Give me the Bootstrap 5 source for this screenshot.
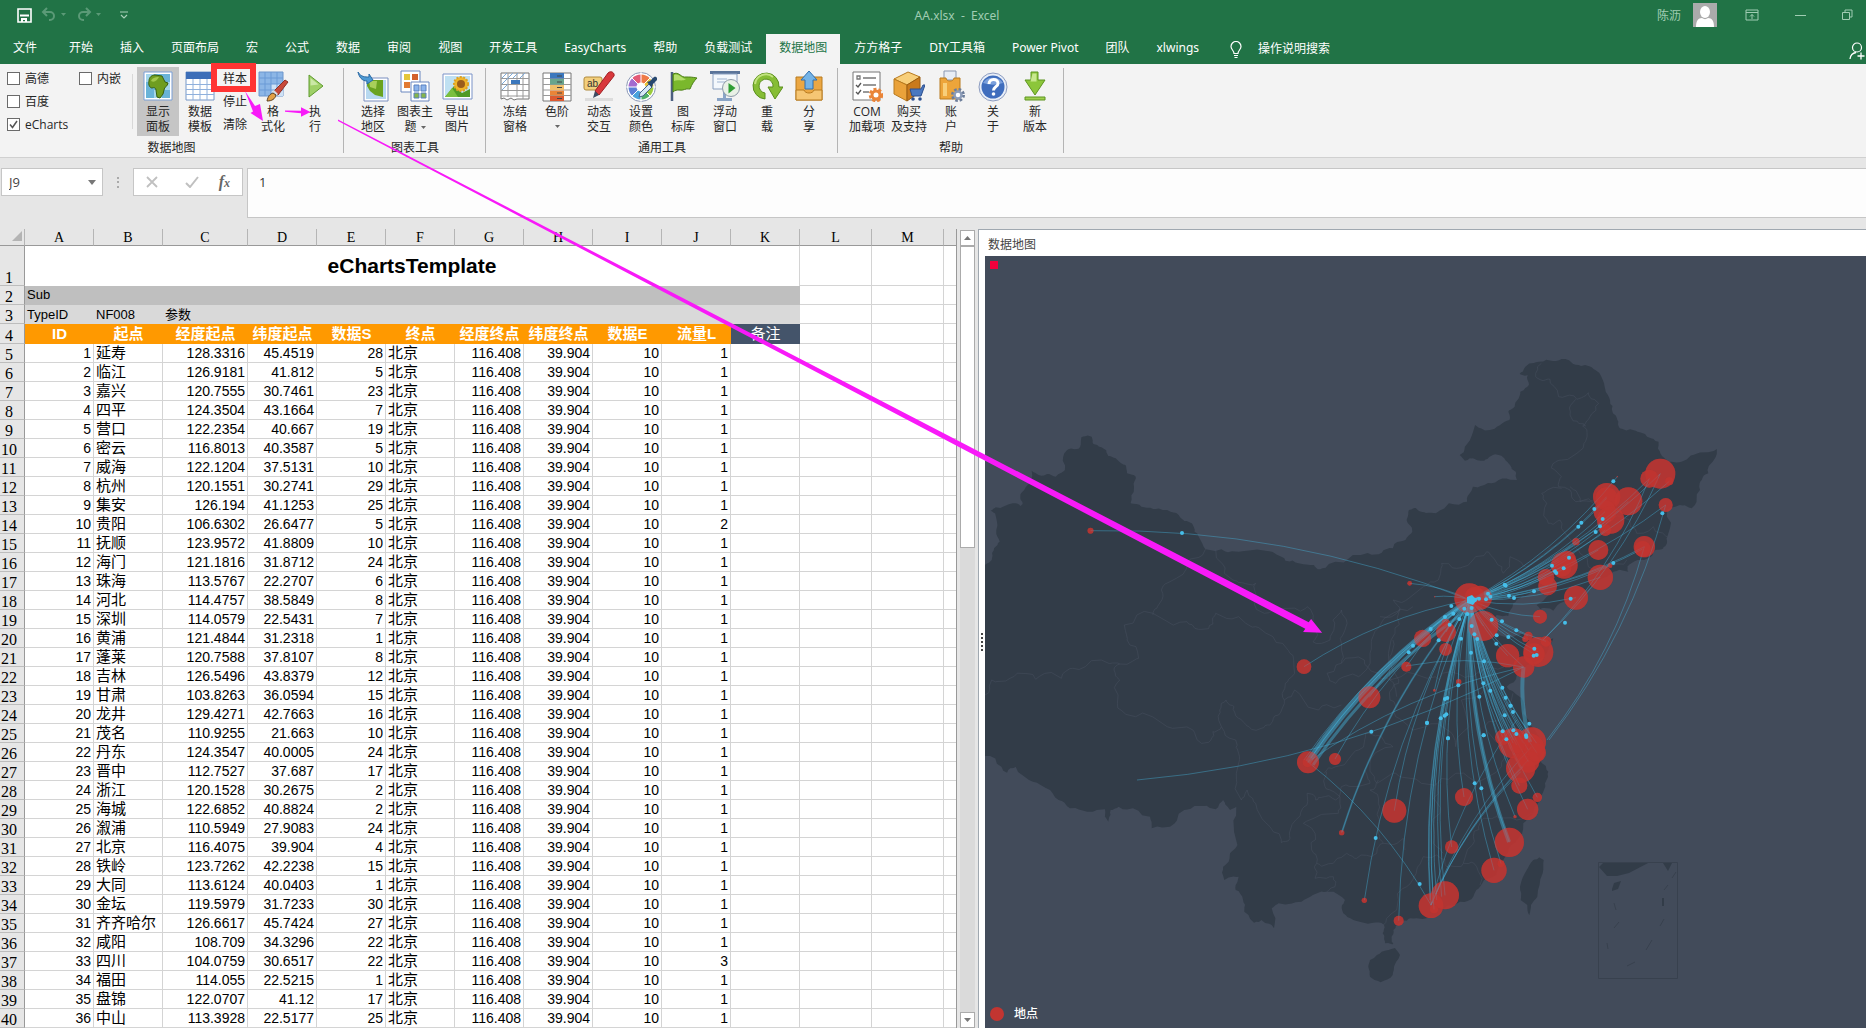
<!DOCTYPE html>
<html lang="zh-CN">
<head>
<meta charset="utf-8">
<meta name="viewport" content="width=device-width, initial-scale=1">
<title>AA.xlsx - Excel</title>
<link href="https://cdn.jsdelivr.net/npm/bootstrap@5.3.0/dist/css/bootstrap.min.css" rel="stylesheet">
<style>
  :root { --xl-green:#217346; --edge:#c6c6c6; --ui:"Open Sans","Noto Sans CJK SC",sans-serif; }
  body { font-family:var(--ui); font-size:12px; line-height:15px; color:#262626; background:#e6e6e6; }
  svg { display:block; }
  .titlebar { height:32px; padding-bottom:2px; background:var(--xl-green); color:#a0cdb3; }
  .titlebar .side { flex:1 1 0; }
  .doc-name { white-space:pre; margin-left:44px; font-family:"Noto Sans",sans-serif; }
  .qat { gap:9px; padding-left:17px; }
  .wincontrols { gap:12px; padding-right:13px; }
  .tabstrip { height:32px; background:var(--xl-green); font-family:"Noto Sans","Noto Sans CJK SC",sans-serif; }
  .tabstrip .nav-link { color:#fff; padding:0 13px; margin-right:1px; height:30px; line-height:28px; border-radius:0; white-space:nowrap; }
  .tabstrip .nav-link.first { margin-right:6px; }
  .tabstrip .nav-link.active { background:#f3f3f3; color:var(--xl-green); }
  .ribbon { height:94px; background:#f3f3f3; border-bottom:1px solid #d0d0d0; }
  .rgroup { padding:3px 7px 0 8px; }
  .rgroup.first { padding-left:7px; }
  .rbody { height:70px; }
  .rsep { width:1px; height:85px; margin-top:4px; background:#b4b4b4; }
  .rsep.soft { height:55px; margin:7px 4px 0 0; background:#d8d8d8; }
  .rlabel { text-align:center; line-height:16px; margin-top:3px; }
  .rbtn { width:42px; height:69px; padding:0; border:0; border-radius:0; font-size:12px; line-height:15px; color:#262626; white-space:nowrap; display:flex; flex-direction:column; align-items:center; }
  .rbtn svg { width:32px; height:32px; margin:3px 0 2px; flex:none; }
  .rbtn.on { background:#c5c5c5; }
  .smallcol { width:31px; }
  .smallcol .btn { height:23px; padding:0; border:0; font-size:12px; line-height:22px; color:#262626; text-align:left; position:relative; white-space:nowrap; padding-left:2px; }
  .redframe { position:absolute; left:-10px; top:-4px; width:45px; height:29px; border:6px solid #ff3433; }
  .checks { grid-template-columns:72px 49px; grid-auto-rows:23px; display:grid; width:125px; }
  .checks label { display:flex; align-items:center; gap:5px; white-space:nowrap; }
  .checks input { appearance:none; width:13px; height:13px; border:1px solid #6a6a6a; background:#fff center/11px no-repeat; margin:0; flex:none; }
  .checks input:checked { background-image:url("data:image/svg+xml,%3Csvg xmlns='http://www.w3.org/2000/svg' viewBox='0 0 11 11'%3E%3Cpath d='M2 5.5l2.5 3L9 2' fill='none' stroke='%23555' stroke-width='1.5'/%3E%3C/svg%3E"); }
  .formula { padding:10px 0 11px 1px; }
  .formula select { appearance:none; width:102px; height:28px; border:1px solid var(--edge); background:#fff; padding:0 7px; border-radius:0; color:#444; font-size:13px; }
  .namebox { position:relative; }
  .namebox svg { position:absolute; right:7px; top:12px; }
  .dots { margin:8px 14px 0; }
  .fxbox { width:110px; height:28px; border:1px solid var(--edge); background:#fff; padding:0 12px; }
  .fxbox .btn { padding:0; border:0; line-height:1; }
  .fxbox .fn { font:italic 700 16px "Liberation Serif",serif; color:#666; }
  .fxbox .fn span { font-size:12px; }
  .formula input { height:50px; margin-left:4px; border:1px solid var(--edge); border-right:0; background:#fdfdfd; padding:0 11px 22px; color:#333; border-radius:0; min-width:0; font-size:13px; }
  .work { min-height:0; }
  .grid { table-layout:fixed; width:957px; border-collapse:separate; border-spacing:0; font-family:"Liberation Sans","Noto Sans CJK SC",sans-serif; font-size:14px; line-height:18px; color:#000; border-right:1px solid #999; }
  .grid th, .grid td { padding:0 2px; height:19px; border-right:1px solid #d4d4d4; border-bottom:1px solid #d4d4d4; background:#fff; overflow:hidden; white-space:nowrap; vertical-align:middle; text-align:right; font-weight:400; }
  .grid .zh { text-align:left; font-size:15px; }
  .grid thead th { height:17px; line-height:14px; background:#e6e6e6; border-right-color:#b5b5b5; border-bottom-color:#999; text-align:center; font-family:"Liberation Serif",serif; font-size:14px; vertical-align:bottom; }
  .grid tbody th { background:#e6e6e6; border-right-color:#999; border-bottom-color:#bdbdbd; font-family:"Liberation Serif",serif; font-size:16px; line-height:15px; text-align:left; vertical-align:bottom; padding:0 1px; }
  .grid tbody th.narrow { padding-left:5px; }
  .grid td:last-child, .grid thead th:last-child { border-right:0; }
  .grid .r1 td { height:40px; }
  .grid .r1 .sheet-title { font-size:21px; font-weight:700; text-align:center; border-bottom:0; }
  .grid .r2 .fillc { background:#bfbfbf; border-color:#bfbfbf; border-right:0; }
  .grid .r3 td { height:18px; line-height:17px; }
  .grid .r3 .fillc { background:#d9d9d9; border-bottom:0; border-right:0; }
  .grid .r2 .fillc, .grid .r3 .fillc { text-align:left; font-size:13px; }
  .grid .r4 td { height:20px; }
  .grid .r4 .hd { background:#ff9900; color:#fff; font-weight:700; font-size:15px; text-align:center; border:0; padding:0; }
  .grid .r4 .hd.note { background:#44546a; font-weight:400; }
  .vscroll { width:15px; margin:1px 3px 0 3px; background:#dadada; }
  .vscroll .btn { height:16px; padding:0; border:1px solid #ababab; border-radius:0; background:#fff; display:flex; align-items:center; justify-content:center; }
  .thumb { height:302px; border:1px solid #ababab; background:#fff; }
  .pane { border-left:1px solid #a0a8b0; border-top:1px solid #a0a8b0; background:#fff; min-width:0; }
  .pane-title { height:26px; line-height:30px; padding-left:9px; color:#444; }
  .gripbar { width:6px; flex:none; padding-top:377px; }
  .mapbox { min-width:0; min-height:0; position:relative; background:#424b5a; }
  .mapbox > svg { width:100%; height:100%; }
  .legend-item { position:absolute; left:5px; bottom:7px; color:#fff; gap:10px; font-weight:500; }
  .legend-item i { width:14px; height:14px; border-radius:50%; background:#c23531; }
  .arrows { position:absolute; left:0; top:0; pointer-events:none; z-index:5; }
</style>
</head>
<body class="vh-100 overflow-hidden d-flex flex-column position-relative">

<header class="titlebar d-flex align-items-center">
  <div class="side qat d-flex align-items-center">
    <svg width="15" height="15" viewBox="0 0 15 15"><path d="M1 1h13v13H1z" fill="none" stroke="#fff" stroke-width="1.6"/><path d="M3 7.500h9" stroke="#fff" stroke-width="2"/><path d="M4 10h6v4H8v-2H6v2H4z" fill="#fff"/></svg>
    <svg width="26" height="16" viewBox="0 0 26 16"><path d="M6 1L2 5l4 4M2 5h7a4 4 0 0 1 0 8H8" fill="none" stroke="#5b9a77" stroke-width="2"/><path d="M20 6h5l-2.500 3z" fill="#5b9a77"/></svg>
    <svg width="26" height="16" viewBox="0 0 26 16"><path d="M10 1l4 4-4 4M14 5H7a4 4 0 0 0 0 8h1" fill="none" stroke="#5b9a77" stroke-width="2"/><path d="M20 6h5l-2.500 3z" fill="#5b9a77"/></svg>
    <svg class="ms-2" width="10" height="10" viewBox="0 0 10 10"><path d="M1 2h8M2 5l3 3 3-3" fill="none" stroke="#a8d0b8" stroke-width="1.2"/></svg>
  </div>
  <div class="doc-name">AA.xlsx  -  Excel</div>
  <div class="side wincontrols d-flex align-items-center justify-content-end">
    <span>陈沥</span>
    <svg width="24" height="24" viewBox="0 0 24 24"><path fill="#ababab" d="M0 0h24v24H0z"/><ellipse cx="12" cy="9" rx="5" ry="6" fill="#fff"/><path d="M3 24c0-6 2-9 6-9 2 1.500 4 1.500 6 0 4 0 6 3 6 9z" fill="#fff"/></svg>
    <svg class="ms-3" width="14" height="12" viewBox="0 0 14 12"><path d="M1 1h12v10H1zM1 3.500h12M7 10V5.500M5 7.500l2-2 2 2" fill="none" stroke="#a0cdb3"/></svg>
    <svg class="ms-4" width="11" height="12" viewBox="0 0 11 12"><path d="M0 6.500h11" stroke="#a0cdb3"/></svg>
    <svg class="ms-4" width="11" height="12" viewBox="0 0 11 12"><path d="M.5 3.500h7v7h-7zM3 3.500V1h7v7H7.500" fill="none" stroke="#a0cdb3"/></svg>
  </div>
</header>

<nav class="tabstrip d-flex align-items-end">
  <div class="nav flex-nowrap">
    <a class="nav-link first" href="#">文件</a><a class="nav-link" href="#">开始</a><a class="nav-link" href="#">插入</a><a class="nav-link" href="#">页面布局</a><a class="nav-link" href="#">宏</a><a class="nav-link" href="#">公式</a><a class="nav-link" href="#">数据</a><a class="nav-link" href="#">审阅</a><a class="nav-link" href="#">视图</a><a class="nav-link" href="#">开发工具</a><a class="nav-link" href="#">EasyCharts</a><a class="nav-link" href="#">帮助</a><a class="nav-link" href="#">负载测试</a><a class="nav-link active" href="#">数据地图</a><a class="nav-link" href="#">方方格子</a><a class="nav-link" href="#">DIY工具箱</a><a class="nav-link" href="#">Power Pivot</a><a class="nav-link" href="#">团队</a><a class="nav-link" href="#">xlwings</a>
    <a class="nav-link d-flex align-items-center gap-3 ms-1" href="#"><svg width="12" height="17" viewBox="0 0 12 17"><path d="M4 12.500c0-3-3-4-3-7a5 5 0 0 1 10 0c0 3-3 4-3 7zM4 14.500h4M4.500 16.500h3" fill="none" stroke="#fff" stroke-width="1.2"/></svg>操作说明搜索</a>
  </div>
  <svg class="ms-auto mb-1" width="17" height="18" viewBox="0 0 17 18"><circle cx="8" cy="5.500" r="4.500" fill="none" stroke="#fff" stroke-width="1.200"/><path d="M1 17c.5-4 2.500-6 6-6.500M8.500 14h7M12 10.500v7" fill="none" stroke="#fff" stroke-width="1.300"/></svg>
</nav>

<section class="ribbon d-flex">
  <div class="rgroup first">
    <div class="rbody d-flex">
      <div class="checks">
        <label><input type="checkbox">高德</label><label><input type="checkbox">内嵌</label>
        <label style="grid-column:1"><input type="checkbox">百度</label>
        <label style="grid-column:1"><input type="checkbox" checked>eCharts</label>
      </div>
      <div class="rsep soft"></div>
      <button class="btn rbtn on"><svg viewBox="0 0 32 32"><path d="M2 2h28v28H2z" fill="#fff" stroke="#7b9fd6"/><path d="M4 4h24v24H4z" fill="#69b3d8"/><path d="M4 4h8v8H4zM20 12h8v8h-8zM12 20h8v8h-8z" fill="#a4d6ec"/><path d="M7 11c0-4 3-6 6-6l7 1 3 6 3 1c0 3-4 4-4 7l-1 4-3 4-3-1-1-7c0-2-2-3-4-2-2 0-4-3-3-7z" fill="#6f9d21" stroke="#38610f"/><path d="M9 11c1-3 4-4 8-4-2 3-4 6-8 4z" fill="#a3c94e"/></svg>显示<br>面板</button>
      <button class="btn rbtn"><svg viewBox="0 0 32 32"><path d="M2 2h28v28H2z" fill="#fff" stroke="#7698c8"/><path d="M2 2h28v7H2z" fill="#3c6eb8"/><path d="M2 14.500h28M2 19.500h28M2 24.500h28M9 9v21M16 9v21M23 9v21" stroke="#8fb0dc"/></svg>数据<br>模板</button>
      <div class="smallcol d-flex flex-column">
        <button class="btn">样本<span class="redframe"></span></button><button class="btn">停止</button><button class="btn">清除</button>
      </div>
      <button class="btn rbtn"><svg viewBox="0 0 32 32"><path d="M2 2h24v24H2z" fill="#8cb6e6" stroke="#6d96cc"/><path d="M14 14h12v12H14z" fill="#cfe2f6"/><path d="M2 8h24M2 14h24M2 20h24M8 2v24M14 2v24M20 2v24" stroke="#6a9ad6"/><path d="M16 22L28 10l3 2-10 13z" fill="#c8493a" stroke="#8f2f25"/><path d="M15 22l2-2 4 4-2 2z" fill="#d5dbe4"/><path d="M10 31c1-5 3-7 6-8l3 2c-1 4-4 6-9 6z" fill="#e2a046" stroke="#5b4022"/></svg>格<br>式化</button>
      <button class="btn rbtn"><svg viewBox="0 0 32 32"><path d="M10 5l14 11-14 11z" fill="#9fd067" stroke="#5e9a2e"/><path d="M11.500 8l8 6.500-8 1z" fill="#cbe8a6"/></svg>执<br>行</button>
    </div>
    <div class="rlabel">数据地图</div>
  </div>
  <div class="rsep"></div>
  <div class="rgroup">
    <div class="rbody d-flex">
      <button class="btn rbtn"><svg viewBox="0 0 32 32"><path d="M7 8h24v23H7z" fill="#fff" stroke="#7b8fc0"/><path d="M9 10h20v19H9z" fill="#b7d8f0"/><path d="M10 10h16v17l-8-2-5-4-3-5z" fill="#6aa320"/><path d="M12 11h8l-1 8-6-2z" fill="#a9cf5a"/><path d="M1 2c3 5 7 5 11 5V4l4 6-6 4V11C5 11 2 7 1 2z" fill="#4d9ad4" stroke="#2a6aa5"/></svg>选择<br>地区</button>
      <button class="btn rbtn"><svg viewBox="0 0 32 32"><path d="M2 1h19v21H2z" fill="#fff" stroke="#6b87c0"/><path d="M5 4h6v6H5z" fill="#e4c63a"/><path d="M13 4h6v6h-6z" fill="#d3602c"/><path d="M5 12h6v6H5z" fill="#e27a33"/><path d="M12 12h18v19H12z" fill="#fff" stroke="#6b87c0"/><path d="M15 15h5v6h-5zM22 15h5v6h-5z" fill="#8cb4ec" stroke="#5a80c0"/><path d="M15 23h5v5h-5zM22 23h5v5h-5z" fill="#86b54a" stroke="#5a80c0"/></svg>图表主<br><span>题<svg class="d-inline-block m-0 ms-1" style="width:5px;height:5px" viewBox="0 0 5 5"><path d="M0 1h5L2.500 4z" fill="#666"/></svg></span></button>
      <button class="btn rbtn"><svg viewBox="0 0 32 32"><path d="M2 4h29v25H2z" fill="#fff" stroke="#7b93c8"/><path d="M4 6h25v21H4z" fill="#bfe0f2"/><path d="M4 27l9-11 8 7 8-4v8z" fill="#4f9a25"/><path d="M4 27l7-9 6 9z" fill="#7abf3e"/><circle cx="20" cy="14" r="7" fill="#f0b52a" stroke="#dda024" stroke-dasharray="2 1.500" stroke-width="2"/><circle cx="20" cy="14" r="4" fill="#9a5c1c"/></svg>导出<br>图片</button>
    </div>
    <div class="rlabel">图表工具</div>
  </div>
  <div class="rsep"></div>
  <div class="rgroup">
    <div class="rbody d-flex">
      <button class="btn rbtn"><svg viewBox="0 0 32 32"><path d="M2 3h28v26H18l-3 1-3-2-4 2-3-2-3 1z" fill="#fff" stroke="#777"/><path d="M2 8.500h28M2 14.500h28M2 20.500h28M2 26h28M9 3v24M18 3v24M24 3v26" stroke="#999"/><path d="M12 10h9v4h-9z" fill="#3c78bd"/><path d="M3 8l5-5M3 14l11-11M3 20l6-6M14 8l5-5M21 8l5-5" stroke="#7eaad8"/></svg>冻结<br>窗格</button>
      <button class="btn rbtn"><svg viewBox="0 0 32 32"><path d="M2 3h28v28H2z" fill="#fff" stroke="#777"/><path d="M2 8.500h28M2 14.500h28M2 20h28M2 25.500h28" stroke="#999"/><path d="M9 3h14v5.500H9z" fill="#3c78bd"/><path d="M9 9h14v5.500H9z" fill="#69a58c"/><path d="M9 15h14v5H9z" fill="#f0bf6a"/><path d="M9 20.500h14v5H9z" fill="#ea8438"/><path d="M9 26h14v5H9z" fill="#dc5a32"/><path d="M16 6h5M16 12h5M16 17.500h5M16 23h5M16 28.500h5" stroke="#444"/></svg>色阶<br><svg style="width:5px;height:5px;margin:5px 0 0" viewBox="0 0 5 5"><path d="M0 1h5L2.500 4z" fill="#666"/></svg></button>
      <button class="btn rbtn"><svg viewBox="0 0 32 32"><rect x="1" y="7" width="18" height="13" rx="2" fill="#f3cf7c" stroke="#b08a3c"/><text x="4" y="17" font-size="10" fill="#333" font-family="Liberation Sans">ab</text><path d="M2 28h28v3H2z" fill="#dcdcdc"/><path d="M12 21L25 3c3-3 7 0 6 3L16 25z" fill="#d8383c" stroke="#a02025"/><path d="M10 28l2-7 4 4z" fill="#3d4c63"/></svg>动态<br>交互</button>
      <button class="btn rbtn"><svg viewBox="0 0 32 32"><circle cx="16" cy="17" r="14.500" fill="#fff" stroke="#8a97b5"/><g fill="none" stroke-width="8"><path d="M16 8.500A8.500 8.500 0 0 1 22 11" stroke="#ee7a48"/><path d="M22 11a8.500 8.500 0 0 1 2.500 6" stroke="#e9c33b"/><path d="M24.500 17a8.500 8.500 0 0 1-2.500 6" stroke="#9bcb3c"/><path d="M22 23a8.500 8.500 0 0 1-6 2.500" stroke="#4fb06a"/><path d="M16 25.500A8.500 8.500 0 0 1 10 23" stroke="#4aa3dd"/><path d="M10 23a8.500 8.500 0 0 1-2.500-6" stroke="#5c7fd6"/><path d="M7.500 17A8.500 8.500 0 0 1 10 11" stroke="#a46bcf"/><path d="M10 11a8.500 8.500 0 0 1 6-2.500" stroke="#e35a78"/></g><path d="M16 2v30M1 17h30M6 7l20 20M26 7L6 27" stroke="#fff"/><path d="M14 27l1-4 9-9 3 3-9 9z" fill="#d6e8f7" stroke="#47638c"/><path d="M22 12l3-1 4-4c2-1 4 1 3 3l-4 4-1 4z" fill="#28486f"/></svg>设置<br>颜色</button>
      <button class="btn rbtn"><svg viewBox="0 0 32 32"><path d="M5 2v29" stroke="#4c5f80" stroke-width="2.500"/><path d="M6 4c6-3 8 4 13 3 4 0 6 0 11 1-3 3-5 6-7 11-5-1-6 2-11 1-2 0-4 0-6 2z" fill="#7ab82c" stroke="#4d8018"/><path d="M7 5c5-2 8 4 12 4-4 3-8 0-12 2z" fill="#b4dd6c"/></svg>图<br>标库</button>
      <button class="btn rbtn"><svg viewBox="0 0 32 32"><path d="M1 1h30v3H1z" fill="#5a7499"/><path d="M4 4h24v15H4z" fill="#f4f8fc" stroke="#8aa0c0"/><path d="M8 9h10M8 12h8" stroke="#9fb4d0"/><path d="M14 19h3v9h6v3H8v-3h6z" fill="#8aa4c6"/><circle cx="22" cy="18" r="8.500" fill="#e9f1e6" stroke="#8d9aa8"/><path d="M19.500 13l7 5-7 5.500z" fill="#2f9e35"/></svg>浮动<br>窗口</button>
      <button class="btn rbtn"><svg viewBox="0 0 32 32"><path d="M14 29A13 13 0 1 1 28 17h4l-8 12-7-12h5a7 7 0 1 0-8 6z" fill="#86bd35" stroke="#5a8f1d"/><path d="M4 14A11 11 0 0 1 22 7" fill="none" stroke="#c2e37f" stroke-width="2"/></svg>重<br>载</button>
      <button class="btn rbtn"><svg viewBox="0 0 32 32"><path d="M3 7h26v23H3z" fill="#eba743" stroke="#b87a1e"/><path d="M3 20h8c1 4 9 4 10 0h8v10H3z" fill="#f6c674" stroke="#b87a1e"/><path d="M16 1l8 9h-4v9h-8v-9H8z" fill="#74b3e6" stroke="#2f6faf"/></svg>分<br>享</button>
    </div>
    <div class="rlabel">通用工具</div>
  </div>
  <div class="rsep"></div>
  <div class="rgroup">
    <div class="rbody d-flex">
      <button class="btn rbtn"><svg viewBox="0 0 32 32"><path d="M2 2h27v28H2z" fill="#fff" stroke="#777"/><path d="M6 6h3v3H6zM12 8h13M12 15h13M12 22h6" fill="none" stroke="#777" stroke-width="1.300"/><path d="M5 15l2 2 3-4M5 22l2 2 3-4" fill="none" stroke="#555" stroke-width="1.300"/><circle cx="25" cy="25" r="4" fill="none" stroke="#ea8438" stroke-width="3"/><circle cx="25" cy="25" r="6" fill="none" stroke="#ea8438" stroke-width="2.500" stroke-dasharray="3 2"/></svg>COM<br>加载项</button>
      <button class="btn rbtn"><svg viewBox="0 0 32 32"><path d="M1 9l14-7 12 5-13 8z" fill="#f8cf7a" stroke="#b87a1e"/><path d="M1 9l13 6v16L1 24z" fill="#eaa23a" stroke="#b87a1e"/><path d="M14 15l13-8v15l-13 9z" fill="#c97a1c" stroke="#9a5c10"/><path d="M17 19h11l2-4h2l-4 11h-9z" fill="#4a78c0" stroke="#2c4f8f"/><circle cx="20" cy="29" r="1.800" fill="#2c4f8f"/><circle cx="27" cy="29" r="1.800" fill="#2c4f8f"/></svg>购买<br>及支持</button>
      <button class="btn rbtn"><svg viewBox="0 0 32 32"><path d="M9 1h12v9H9z" fill="#e8edf5" stroke="#8a97b0"/><path d="M5 8h6c0 4 8 4 8 0h6v21H5z" fill="#eda53a" stroke="#b87a1e"/><path d="M8 13h4v13H8z" fill="#f8cf7a"/><circle cx="23" cy="25" r="5.500" fill="none" stroke="#6c7d9a" stroke-width="3" stroke-dasharray="2.500 1.800"/><circle cx="23" cy="25" r="3.500" fill="#fff" stroke="#8c9cb8" stroke-width="2.500"/></svg>账<br>户</button>
      <button class="btn rbtn"><svg viewBox="0 0 32 32"><circle cx="16" cy="17" r="14" fill="#e8eef8" stroke="#8c9cc0"/><circle cx="16" cy="17" r="11.500" fill="#3f6dbd"/><path d="M6 13a11 9 0 0 1 20 0 20 12 0 0 1-20 0z" fill="#7ba0dc"/><path d="M12 14c0-6 9-6 9-.5 0 3-4.500 3.500-4.500 7" fill="none" stroke="#fff" stroke-width="3"/><circle cx="16.500" cy="24" r="1.800" fill="#fff"/></svg>关<br>于</button>
      <button class="btn rbtn"><svg viewBox="0 0 32 32"><path d="M12 2h7v8h7L16 25 6 10h6z" fill="#8cc63a" stroke="#5d9420"/><path d="M13.500 3.500h4v8h-6z" fill="#c8e88e"/><path d="M6 27h20v3H6z" fill="#9fd04e" stroke="#5d9420"/></svg>新<br>版本</button>
    </div>
    <div class="rlabel">帮助</div>
  </div>
  <div class="rsep"></div>
</section>

<section class="formula d-flex align-items-start">
  <div class="namebox"><select aria-label="名称框"><option>J9</option></select><svg width="8" height="5" viewBox="0 0 8 5"><path d="M0 0h8L4 5z" fill="#777"/></svg></div>
  <svg class="dots" width="2" height="13" viewBox="0 0 2 13"><path d="M1 1v2M1 5v2M1 10v2" stroke="#aaa" stroke-width="2"/></svg>
  <div class="fxbox d-flex align-items-center justify-content-between">
    <button class="btn" aria-label="取消"><svg width="12" height="12" viewBox="0 0 12 12"><path d="M1 1l10 10M11 1L1 11" stroke="#c0c0c0" stroke-width="1.800"/></svg></button>
    <button class="btn ms-2" aria-label="输入"><svg width="14" height="12" viewBox="0 0 14 12"><path d="M1 7l4 4 8-10" fill="none" stroke="#c0c0c0" stroke-width="2"/></svg></button>
    <button class="btn fn" aria-label="插入函数">f<span>x</span></button>
  </div>
  <input class="flex-grow-1" value="1" aria-label="编辑栏">
</section>

<main class="work d-flex flex-grow-1">
  <table class="grid flex-shrink-0">
    <colgroup><col style="width:25px"><col style="width:69px"><col style="width:69px"><col style="width:85px"><col style="width:69px"><col style="width:69px"><col style="width:69px"><col style="width:69px"><col style="width:69px"><col style="width:69px"><col style="width:69px"><col style="width:69px"><col style="width:72px"><col style="width:72px"><col style="width:12px"></colgroup>
    <thead><tr><th><svg class="ms-auto mb-1" width="10" height="10" viewBox="0 0 10 10"><path d="M10 0v10H0z" fill="#b4b4b4"/></svg></th><th>A</th><th>B</th><th>C</th><th>D</th><th>E</th><th>F</th><th>G</th><th>H</th><th>I</th><th>J</th><th>K</th><th>L</th><th>M</th><th></th></tr></thead>
    <tbody id="cells">
      <tr class="r1"><th class="narrow">1</th><td class="sheet-title" colspan="11">eChartsTemplate</td><td></td><td></td><td></td></tr>
      <tr class="r2"><th class="narrow">2</th><td class="fillc" colspan="11">Sub</td><td></td><td></td><td></td></tr>
      <tr class="r3"><th class="narrow">3</th><td class="fillc">TypeID</td><td class="fillc">NF008</td><td class="fillc" colspan="9">参数</td><td></td><td></td><td></td></tr>
      <tr class="r4"><th class="narrow">4</th><td class="hd">ID</td><td class="hd">起点</td><td class="hd">经度起点</td><td class="hd">纬度起点</td><td class="hd">数据S</td><td class="hd">终点</td><td class="hd">经度终点</td><td class="hd">纬度终点</td><td class="hd">数据E</td><td class="hd">流量L</td><td class="hd note">备注</td><td></td><td></td><td></td></tr>
    </tbody>
  </table>
  <div class="vscroll d-flex flex-column flex-shrink-0">
    <button class="btn" aria-label="向上滚动"><svg width="7" height="4" viewBox="0 0 7 4"><path d="M0 4h7L3.500 0z" fill="#777"/></svg></button>
    <div class="thumb"></div>
    <button class="btn mt-auto" aria-label="向下滚动"><svg width="7" height="4" viewBox="0 0 7 4"><path d="M0 0h7L3.500 4z" fill="#777"/></svg></button>
  </div>
  <aside class="pane d-flex flex-column flex-grow-1">
    <div class="pane-title">数据地图</div>
    <div class="d-flex flex-grow-1 overflow-hidden">
      <div class="gripbar"><svg width="6" height="19" viewBox="0 0 6 19"><path d="M3 0v19" stroke="#444" stroke-width="2" stroke-dasharray="2 2"/></svg></div>
      <div class="mapbox flex-grow-1">
        <svg id="map" viewBox="985 256 881 772" preserveAspectRatio="xMinYMin slice"></svg>
        <div class="legend-item d-flex align-items-center"><i></i><span>地点</span></div>
      </div>
    </div>
  </aside>
</main>

<svg class="arrows" width="1866" height="1028" viewBox="0 0 1866 1028">
  <g fill="#f81af8"><path d="M338 119.500l970.700 502.700 2.400-3.200 11 13.800-19-.8 2.200-3.200L338 121z"/><path d="M245 91l10 15 5-2 3 17-12.500-8 2.500-1.500z"/><path d="M285 110.500l16 .2v-3.500l9.500 4.800-9.500 4.800v-3.500l-16-1.500z"/></g>
</svg>

<script src="https://cdn.jsdelivr.net/npm/bootstrap@5.3.0/dist/js/bootstrap.bundle.min.js"></script>
<script>
const rows = `延寿 128.3316 45.4519 28|临江 126.9181 41.812 5|嘉兴 120.7555 30.7461 23|四平 124.3504 43.1664 7|营口 122.2354 40.667 19|密云 116.8013 40.3587 5|威海 122.1204 37.5131 10|杭州 120.1551 30.2741 29|集安 126.194 41.1253 25|贵阳 106.6302 26.6477 5 2|抚顺 123.9572 41.8809 10|海门 121.1816 31.8712 24|珠海 113.5767 22.2707 6|河北 114.4757 38.5849 8|深圳 114.0579 22.5431 7|黄浦 121.4844 31.2318 1|蓬莱 120.7588 37.8107 8|吉林 126.5496 43.8379 12|甘肃 103.8263 36.0594 15|龙井 129.4271 42.7663 16|茂名 110.9255 21.663 10|丹东 124.3547 40.0005 24|晋中 112.7527 37.687 17|浙江 120.1528 30.2675 2|海城 122.6852 40.8824 2|溆浦 110.5949 27.9083 24|北京 116.4075 39.904 4|铁岭 123.7262 42.2238 15|大同 113.6124 40.0403 1|金坛 119.5979 31.7233 30|齐齐哈尔 126.6617 45.7424 27|咸阳 108.709 34.3296 22|四川 104.0759 30.6517 22 3|福田 114.055 22.5215 1|盘锦 122.0707 41.12 17|中山 113.3928 22.5177 25`.split('|');
document.getElementById('cells').insertAdjacentHTML('beforeend', rows.map((r, i) => {
  const [n, x, y, s, l = 1] = r.split(' ');
  return `<tr><th${i < 5 ? ' class="narrow"' : ''}>${i + 5}</th><td>${i + 1}</td><td class="zh">${n}</td><td>${x}</td><td>${y}</td><td>${s}</td><td class="zh">北京</td><td>116.408</td><td>39.904</td><td>10</td><td>${l}</td><td></td><td></td><td></td><td></td></tr>`;
}).join(''));

const sheet = (ox, oy, sx, sy) => s => s.trim().split(/\s+/).map(p => { const [x, y, ...k] = p.split(',').map(Number); return [ox + x / sx, oy + y / sy, ...k]; });
const N = sheet(970, 220, 1.75, 3), S = sheet(970, 600, 1.75, 3), NE = sheet(1380, 420, 3, 3), SE = sheet(1250, 700, 3, 3);
let seed = 7; const rnd = () => (seed = (seed * 16807) % 2147483647) / 2147483647 - .5;
// midpoint displacement gives coasts and borders their ragged edge
const rough = (p, amp, depth = 2) => { for (let d = 0; d < depth; d++) { const o = []; p.forEach((a, i) => { o.push(a); const b = p[i + 1]; if (b) { const L = Math.hypot(b[0] - a[0], b[1] - a[1]) * amp; o.push([(a[0] + b[0]) / 2 + rnd() * L, (a[1] + b[1]) / 2 + rnd() * L]); } }); p = o; } return p; };
const line = p => 'M' + p.map(q => q[0].toFixed(1) + ' ' + q[1].toFixed(1)).join('L');

const coast = [
 ...N('26,1035 38,1020 42,985 52,965 46,930 44,880 36,872 45,862 75,850 88,858 92,852 88,835 98,800 108,752 120,765 135,762 150,770 166,750 165,700 172,688 190,686 195,652 213,650 216,672 230,682 242,708 255,715 272,735 275,760 290,770 287,800 281,850 300,860 325,867 345,870 365,885 375,903 388,910 393,935 405,965 412,988 440,988 470,995 520,993 545,1010 552,1022 575,1030 602,1035 613,1048 628,1032 670,1005 715,1003 740,985 762,960 774,935 764,900 768,870 780,864 795,877 815,880 838,850 870,845 880,800 900,795 925,780 957,780 955,755 945,735 935,715 915,705 900,722 880,715 866,722 857,705 866,680 884,615 910,630 930,612 944,600 942,575 953,560 963,515 978,495 976,465 962,462 972,440 995,425 1020,423 1042,417 1065,435 1088,442 1105,470 1112,510 1120,540 1125,580 1133,600 1137,625 1165,632 1185,650 1205,665 1208,700 1222,725 1245,725 1270,702 1307,687'),
 ...NE('998,125 985,160 965,180 960,210 935,265 900,255 880,262 860,270 862,350 858,375 845,388 820,395 810,412 780,420 742,440 745,455 700,455 640,490 600,530 540,550 520,572 480,568 470,555 500,530 510,510 480,500 450,520 420,535 400,550 385,588 350,585 330,600 350,640 400,650 440,640 520,655 500,700 440,735 410,765 380,800 425,835 430,880 460,925'),
 ...SE('880,130 870,180 895,215 885,250 870,300 850,340 820,370 800,420 780,440 760,480 730,530 690,560 670,590 630,605 570,640 500,655 470,662 440,675 430,690 425,720 430,732 405,730 398,700 402,675 370,668 310,660 280,640 275,620 285,600 230,575'),
 ...S('600,885 580,905 540,910 528,925 532,985 510,960 497,968 480,935 478,900 465,870 470,830 445,840 443,800 455,760 468,735 466,620 455,630 443,600 430,628 405,618 375,630 350,680 318,685 315,650 285,625 260,620 246,630 242,665 236,628 205,635 175,625 155,600 140,570 110,545 80,500 65,518 55,500 26,468')];
const isles = [SE('868,472 881,480 878,520 862,590 843,615 838,646 832,615 812,600 810,560 830,510 850,480 868,472'), SE('360,780 395,755 435,744 450,765 432,800 428,825 392,847 360,830 355,800 360,780')];
const provinces = [
 S('26,285 38,240 70,235 105,222 115,238 160,235 180,205 230,180 262,192 252,210 262,240 258,310 290,350 345,380 390,390 405,430 422,420 425,395 440,380 437,330 448,300 462,320 470,355 485,378 510,385 525,375 540,345 550,300 568,270 610,330 650,315'),
 S('262,192 295,175 275,120 270,75 320,40 380,65 400,88 425,72 430,40 470,50 500,80 530,110 560,160 568,220 552,250 550,300'),
 N('412,988 380,1040 350,1085 335,1110 328,1160 320,1185'), N('430,988 445,1060 475,1088 500,1090 500,1140 515,1180 560,1165 590,1160 600,1200'),
 S('440,380 465,420 470,460 466,520 475,600 485,570 500,610 525,680 545,728 560,715 570,660 585,620 590,580 605,600 620,590 640,600 650,560 700,550 690,510'),
 S('600,60 600,125 630,120 635,60 650,30 660,70 650,130 650,190 625,220 640,250 680,230 700,160'),
 S('700,160 705,110 740,40 775,20'), S('740,120 735,180 750,250 735,300 745,350 775,390 840,395 850,440 860,300 900,270'),
 S('650,190 690,180 705,215 735,240 800,235 840,215 880,230 935,200'),
 S('620,520 640,500 680,450 692,400 720,410 740,440 700,490 712,550 745,520 790,550 850,520 890,545 930,500 940,440 900,380 935,330 950,280'),
 N('1000,430 990,460 1003,482 1015,478 1030,530 1062,538 1082,518 1100,550 1085,590 1072,618 1080,650 1062,700 1025,725 1018,745 1035,770 1030,800 1050,810 1060,845 1090,848'),
 N('1060,538 1050,585 1065,610 1078,618'), NE('545,205 485,220 500,250 505,310 540,300 560,345 600,400 625,440 680,440 740,420'),
 NE('570,200 600,245 650,245 750,300 770,340 820,320 862,350'), NE('0,590 60,565 40,540 130,500 175,480 185,430 230,445 270,430 320,395 345,420 370,460 390,410 440,440 470,420 530,375'),
 NE('60,565 45,640 30,780 50,830'), SE('160,370 195,400 185,450 200,490 250,490 290,460 320,475 380,460 400,430 460,415 465,450'),
 SE('230,215 225,260 270,290 265,340 160,370'), SE('200,490 195,535 250,530 255,560 230,575'),
 SE('400,675 440,630 470,560 500,510 520,470 560,465 590,500 640,490 680,500 690,555'), SE('385,240 360,270 385,310 385,400 400,430'),
 SE('560,250 570,340 550,430 580,460'), SE('640,490 670,410 690,370 740,350 800,360 850,340'), SE('740,350 730,290 760,250')];

const spots = [
 ...NE('841,161,45 808,176,27 868,184,12 857,255,21 793,380,32 788,387,24 680,230,41 680,235,33 745,244,42 675,275,34 692,300,41 676,330,18 588,365,11 655,390,30 690,437,7 661,472,38 553,436,40 562,418,26 545,440,30 498,472,25 503,498,28 588,533,36 480,590,21 268,535,45 300,533,36 285,530,30 310,618,45 198,636,30 197,608,12 197,688,19 128,655,26 79,740,15 383,707,35 475,696,45 462,702,32 431,741,32 498,664,16 445,648,13 436,657,9 89,490,7 712,170,2 163,811,4 236,785,8 164,530,2'),
 ...SE('174,187,33 173,187,15 255,177,18 358,-8,33 433,332,36 275,398,8 642,291,27 605,441,20 343,601,8 446,662,15 543,617,37 552,628,12 585,586,42 732,511,38 753,491,10 778,427,44 833,328,32 862,292,14 795,350,5 808,257,24 812,205,44 758,112,23 790,130,45 845,125,43 835,150,50 835,185,33 860,158,28 800,135,25'),
 [1304, 666.7, 22], [1090.5, 530.7, 9]];
const hub = [1470, 600], qd = [1523.5, 667], cd = [1308, 762], gz = [1431, 905];
const arc = (a, b, w = 1, o = .42) => { const c = .1, x = (a[0] + b[0]) / 2 - (a[1] - b[1]) * c, y = (a[1] + b[1]) / 2 - (b[0] - a[0]) * c; return `<path d="M${a[0]} ${a[1]}Q${x} ${y} ${b[0]} ${b[1]}" stroke-width="${w}" stroke-opacity="${o}"/>`; };
const flights = spots.map(p => arc(p, hub)).join('')
 + arc(cd, hub, 6, .5) + arc([1313, 765], [1474, 606], 3, .45) + arc([1304, 760], hub) + arc([1509, 842], hub, 4, .45) + arc([1530, 742], qd, 4, .45)
 + arc(qd, [1137, 780]) + arc(cd, qd) + arc(cd, gz)
 + NE('857,255 808,176 793,380 841,161').map((p, i) => arc(p, i % 2 ? [1543, 640] : [1549 - i, 740])).join('')
 + SE('820,200 812,215 835,180 845,140 800,60').map(p => arc(gz, p, 1, .38)).join('')
 + arc([1342, 832], hub, 2, .3) + arc([1406, 666], qd)
 + SE('560,600 575,590 550,610 540,600 830,120 845,110 820,130 790,120 800,105 770,115 860,130').map(p => arc(p, hub, 1, .45)).join('');
const planes = [
 ...NE('700,184 643,267 604,308 595,320 668,297 660,319 647,336 847,280 700,429 567,413 516,437 551,445 525,454 529,459 374,494 377,497 462,514 387,527 402,534 324,521 331,530 318,538 572,536 555,608 297,536 285,540 214,558 253,566 275,564 262,582 220,581 195,591 238,597 209,614 152,627 176,661 99,677 86,697 243,656 275,618 283,643 292,657 335,599 366,604 409,631 350,646 385,651 349,671 273,698 312,724 463,686 461,707 470,705 310,790 331,812 298,830 235,796 367,803 377,833 391,857 399,876 374,886 141,908 182,895 194,887 199,883 195,837 202,834 204,955 311,946 448,911'),
 ...SE('364,95 531,69 594,115 701,106 674,250 694,265 377,414 509,552 782,17 758,94 769,118 790,91 799,102 828,106 829,111'), [1182, 533]];
const g = (attrs, body) => `<g ${attrs}>${body}</g>`;
document.getElementById('map').innerHTML =
   g('fill="#323c48"', `<path d="${line(rough(coast, .3))}Z"/>` + isles.map(p => `<path d="${line(rough(p, .15))}Z"/>`).join('')
     + '<path d="M1599 867l5-5h46l-21 11-12 3h-10zM1663 863h9l-4 8zM1612 889l2-6 7-2-3 8-6 2zM1662 898h2v8h-2z"/>')
 + g('fill="none" stroke="#38414e"', '<path d="M1598.500 862.500h79v116h-79zM1676 872l-4 6M1668 885l-4 5M1614 903l2 7M1619 922l-5 6M1664 919l-4 7M1607 943l1 6M1652 940l-6 10M1635 962l-8 4"/>')
 + g('fill="none" stroke="#4a5361" stroke-opacity=".45"', provinces.map(p => `<path d="${line(rough(p, .45))}"/>`).join(''))
 + g('fill="#c23531" fill-opacity=".8"', spots.map(([x, y, r]) => `<circle cx="${x}" cy="${y}" r="${r / 3}"/>`).join(''))
 + g('fill="none" stroke="#46bee9" opacity=".9"', flights)
 + g('fill="#c23531" fill-opacity=".45"', spots.map(([x, y, r]) => `<circle cx="${x}" cy="${y}" r="${r / 3}"/>`).join(''))
 + g('fill="#46bee9"', planes.map(([x, y]) => `<circle cx="${x}" cy="${y}" r="2"/>`).join('') + '<path d="M1467 597l5-2 3 3 4-1-3 4-3 4-6-2z"/>')
 + '<path d="M990 261h8v8h-8z" fill="#f0003c"/>';
</script>
</body>
</html>
